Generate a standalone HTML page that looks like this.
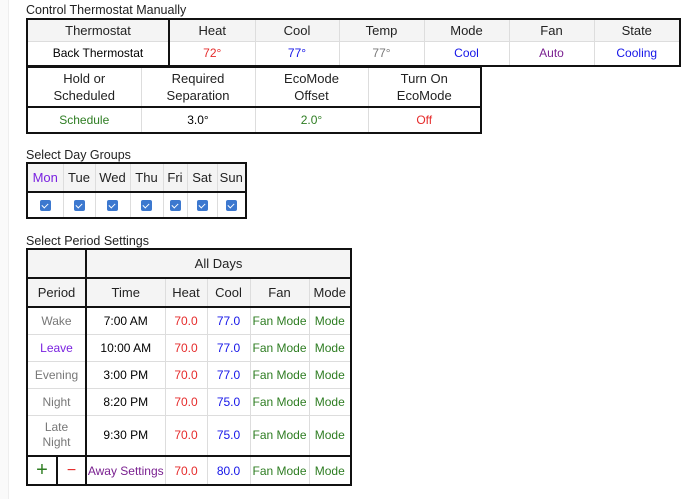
<!DOCTYPE html><html><head><meta charset="utf-8"><style>
body{margin:0;width:690px;height:499px;background:#fff;font-family:"Liberation Sans",Arial,sans-serif;color:#222;position:relative;overflow:hidden}
.side{position:absolute;left:0;top:0;width:8px;height:499px;background:#fafafa;border-right:1px solid #eee}
.t{position:absolute;font-size:12.5px;color:#222}
table{position:absolute;border-collapse:collapse;table-layout:fixed;border:2px solid #111}
td{border:1px solid #ddd;text-align:center;font-size:12px;padding:0;overflow:hidden;white-space:nowrap}
.h td{background:#f4f4f4;font-size:13px;color:#222}
td.r{color:#e52b2b}td.b{color:#1515e8}td.g{color:#2e7d22}td.p{color:#7a2090}td.v{color:#7a22e0}td.gr{color:#777}td.k{color:#000}
.bb{border-bottom:2px solid #111}.br{border-right:2px solid #111}
.cb{display:inline-block;width:11px;height:11px;background:#3c78cf;border-radius:2px;vertical-align:middle;position:relative}
.cb:after{content:"";position:absolute;left:3px;top:1.5px;width:3px;height:5px;border:solid #fff;border-width:0 1.5px 1.5px 0;transform:rotate(45deg)}
</style></head><body>
<div class="side"></div>
<div class="t" style="left:26px;top:3px">Control Thermostat Manually</div>
<table style="left:26px;top:18px;width:653px">
<colgroup><col style="width:142px"><col style="width:86px"><col style="width:84px"><col style="width:85px"><col style="width:85px"><col style="width:85px"><col style="width:86px"></colgroup>
<tr class="h" style="height:22px"><td class="br">Thermostat</td><td>Heat</td><td>Cool</td><td>Temp</td><td>Mode</td><td>Fan</td><td>State</td></tr>
<tr style="height:25px"><td class="br k">Back Thermostat</td><td class="r">72°</td><td class="b">77°</td><td class="gr">77°</td><td class="b">Cool</td><td class="p">Auto</td><td class="b">Cooling</td></tr>
</table>
<table style="left:26px;top:66px;width:454px">
<colgroup><col style="width:114px"><col style="width:114px"><col style="width:113px"><col style="width:113px"></colgroup>
<tr style="height:40px"><td class="bb" style="font-size:13px;line-height:17px">Hold or<br>Scheduled</td><td class="bb" style="font-size:13px;line-height:17px">Required<br>Separation</td><td class="bb" style="font-size:13px;line-height:17px">EcoMode<br>Offset</td><td class="bb" style="font-size:13px;line-height:17px">Turn On<br>EcoMode</td></tr>
<tr style="height:26px"><td class="g">Schedule</td><td class="k">3.0°</td><td class="g">2.0°</td><td class="r">Off</td></tr>
</table>
<div class="t" style="left:26px;top:148px">Select Day Groups</div>
<table style="left:26px;top:162px;width:219px">
<colgroup><col style="width:36px"><col style="width:32px"><col style="width:35px"><col style="width:33px"><col style="width:24px"><col style="width:30px"><col style="width:29px"></colgroup>
<tr class="h" style="height:29px"><td class="bb v">Mon</td><td class="bb">Tue</td><td class="bb">Wed</td><td class="bb">Thu</td><td class="bb">Fri</td><td class="bb">Sat</td><td class="bb">Sun</td></tr>
<tr style="height:26px"><td><span class="cb"></span></td><td><span class="cb"></span></td><td><span class="cb"></span></td><td><span class="cb"></span></td><td><span class="cb"></span></td><td><span class="cb"></span></td><td><span class="cb"></span></td></tr>
</table>
<div class="t" style="left:26px;top:234px">Select Period Settings</div>
<table style="left:26px;top:248px;width:324px">
<colgroup><col style="width:30px"><col style="width:29px"><col style="width:79px"><col style="width:42px"><col style="width:43px"><col style="width:59px"><col style="width:42px"></colgroup>
<tr class="h" style="height:29px"><td colspan="2" class="br bb"></td><td colspan="5" class="bb">All Days</td></tr>
<tr class="h" style="height:29px"><td colspan="2" class="br bb">Period</td><td class="bb">Time</td><td class="bb">Heat</td><td class="bb">Cool</td><td class="bb">Fan</td><td class="bb">Mode</td></tr>
<tr style="height:27px"><td colspan="2" class="br gr">Wake</td><td class="k">7:00 AM</td><td class="r">70.0</td><td class="b">77.0</td><td class="g">Fan Mode</td><td class="g">Mode</td></tr>
<tr style="height:27px"><td colspan="2" class="br v">Leave</td><td class="k">10:00 AM</td><td class="r">70.0</td><td class="b">77.0</td><td class="g">Fan Mode</td><td class="g">Mode</td></tr>
<tr style="height:27px"><td colspan="2" class="br gr">Evening</td><td class="k">3:00 PM</td><td class="r">70.0</td><td class="b">77.0</td><td class="g">Fan Mode</td><td class="g">Mode</td></tr>
<tr style="height:27px"><td colspan="2" class="br gr">Night</td><td class="k">8:20 PM</td><td class="r">70.0</td><td class="b">75.0</td><td class="g">Fan Mode</td><td class="g">Mode</td></tr>
<tr style="height:41px"><td colspan="2" class="br bb gr" style="line-height:15px">Late<br>Night</td><td class="bb k">9:30 PM</td><td class="bb r">70.0</td><td class="bb b">75.0</td><td class="bb g">Fan Mode</td><td class="bb g">Mode</td></tr>
<tr style="height:29px"><td class="br g" style="font-size:20px">+</td><td class="br r" style="font-size:16px">−</td><td class="p">Away Settings</td><td class="r">70.0</td><td class="b">80.0</td><td class="g">Fan Mode</td><td class="g">Mode</td></tr>
</table>
</body></html>
